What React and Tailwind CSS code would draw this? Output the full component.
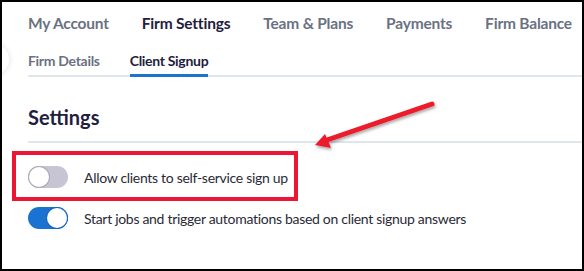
import React from 'react';

const topTabs = ['My Account', 'Firm Settings', 'Team & Plans', 'Payments', 'Firm Balance'];
const subTabs = ['Firm Details', 'Client Signup'];

const Toggle = ({ on }) => (
  <div
    className={`relative w-[40px] h-[22px] rounded-full shrink-0 ${on ? 'bg-[#1a73d1]' : 'bg-[#c7c5d3]'}`}
  >
    <div
      className={`absolute top-[1px] w-[20px] h-[20px] rounded-full bg-white ${
        on ? 'right-[1px] shadow-[0_0_0_1px_#1565c0]' : 'left-[1px] shadow-[0_0_0_1px_#a9a8b6]'
      }`}
    />
  </div>
);

const App = () => {
  return (
    <div
      className="relative w-[584px] h-[271px] border-2 border-black bg-white overflow-hidden"
      style={{ fontFamily: 'Lato, "Open Sans", sans-serif' }}
    >
      {/* bubble peeking from the left */}
      <div className="absolute left-[-24px] top-[42px] w-[31px] h-[31px] rounded-full bg-white shadow-[0_0_6px_rgba(0,0,0,0.12)]" />

      <div className="ml-[26px]">
        <nav className="h-[44px] flex items-center gap-[33px] text-[15.5px] tracking-[-0.2px] font-bold whitespace-nowrap">
          {topTabs.map((t) => (
            <span key={t} className={`shrink-0 ${t === 'Firm Settings' ? 'text-[#1f2040]' : 'text-[#6b7182]'}`}>
              {t}
            </span>
          ))}
        </nav>

        <div className="flex gap-[30px] border-b-2 border-[#dfe6ee] text-[14px] tracking-[-0.3px] font-bold whitespace-nowrap">
          {subTabs.map((t) => (
            <span
              key={t}
              className={`h-[31px] flex items-center -mb-[2px] border-b-[3px] ${
                t === 'Client Signup' ? 'border-[#1a73d1] text-[#1f2040]' : 'border-transparent text-[#6b7182]'
              }`}
            >
              {t}
            </span>
          ))}
        </div>

        <div className="pt-[26px] pb-[10px] border-b-2 border-[#dfe6ee]">
          <h2 className="text-[20px] leading-[28px] font-bold text-[#1f2040]">Settings</h2>
        </div>

        <div className="mt-[23px] flex flex-col gap-[19px] text-[14px] tracking-[-0.3px] text-[#2a2a36] whitespace-nowrap">
          <div className="flex items-center gap-[16px]">
            <Toggle on={false} />
            <span>Allow clients to self-service sign up</span>
          </div>
          <div className="flex items-center gap-[16px]">
            <Toggle on />
            <span>Start jobs and trigger automations based on client signup answers</span>
          </div>
        </div>
      </div>

      {/* annotation: red box */}
      <div className="absolute left-[10px] top-[149px] w-[286px] h-[50px] border-4 border-[#ec1733]" />

      {/* annotation: arrow */}
      <svg className="absolute left-0 top-0" width="584" height="271" viewBox="0 0 584 271">
        <defs>
          <filter id="sh" x="-20%" y="-50%" width="140%" height="200%">
            <feDropShadow dx="1" dy="2" stdDeviation="1.5" floodColor="#000" floodOpacity="0.35" />
          </filter>
        </defs>
        <g filter="url(#sh)">
          <line x1="430" y1="102" x2="322" y2="139" stroke="#ec1a2a" strokeWidth="5" strokeLinecap="round" />
          <polygon points="313,143 323,132 329,146" fill="#ec1a2a" />
        </g>
      </svg>
    </div>
  );
};

export default App;
